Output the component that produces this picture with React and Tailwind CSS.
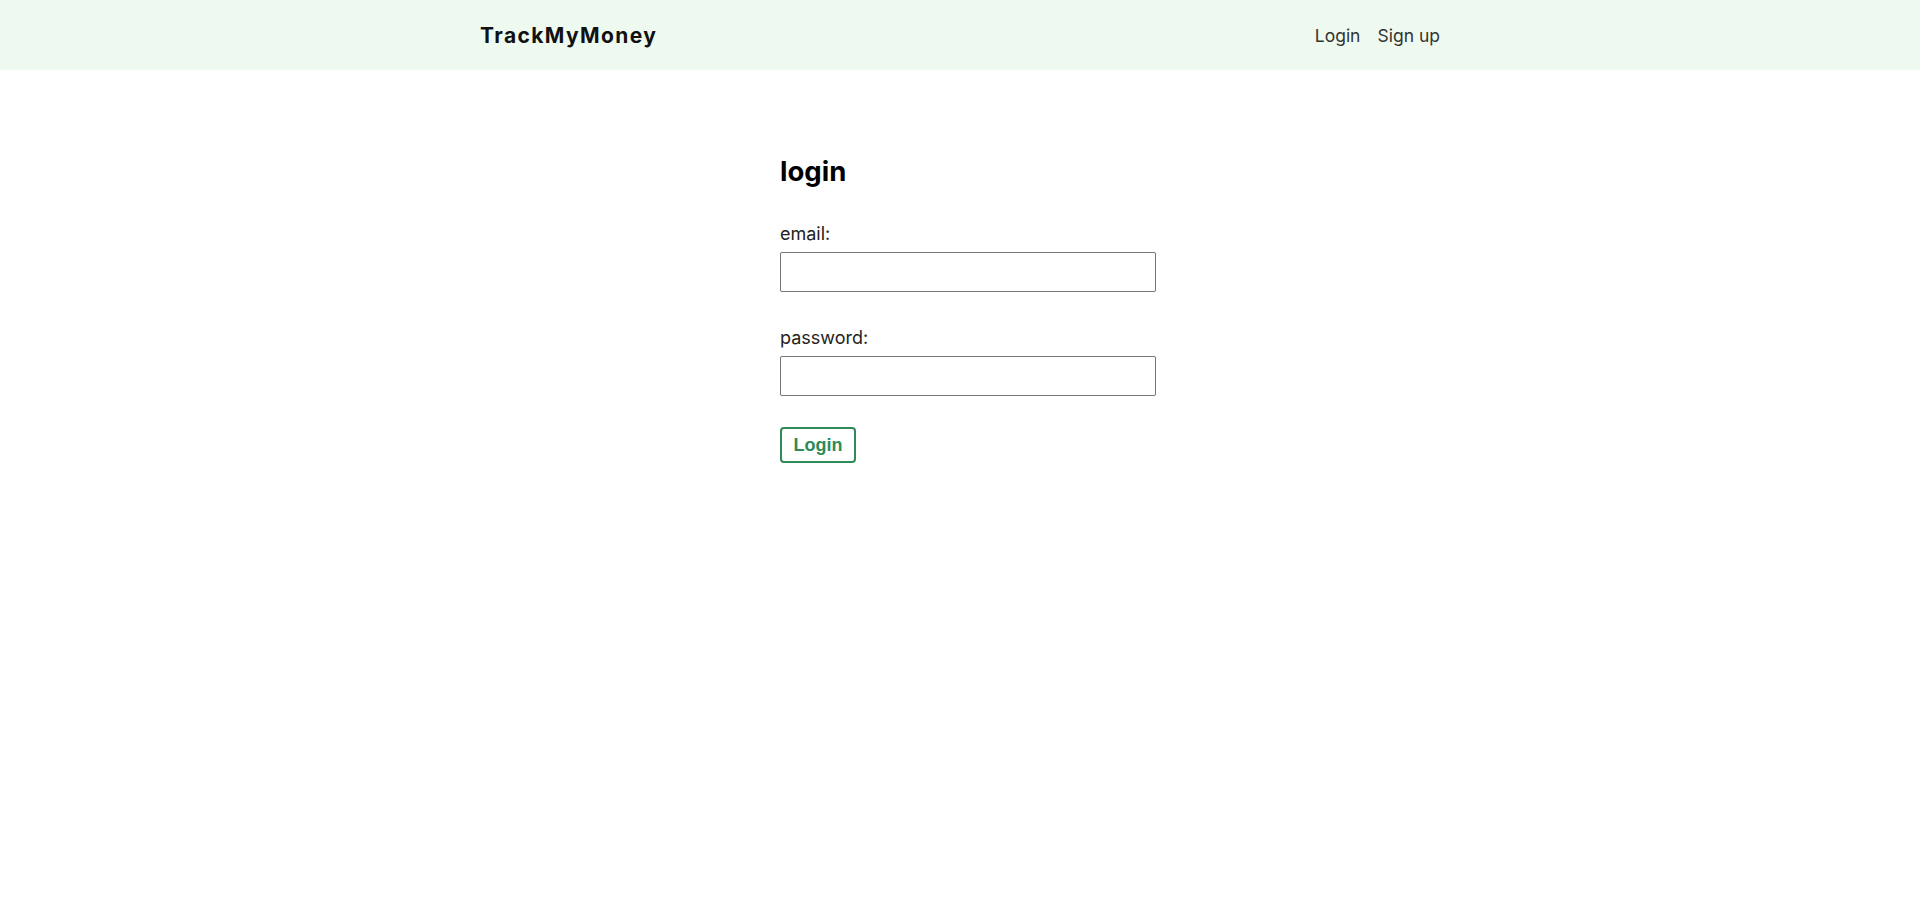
export default function App() {
  return (
    <div className="min-h-screen bg-white" style={{ fontFamily: 'Inter, "Noto Sans", sans-serif' }}>
      <header className="h-[70px] bg-[#eefaf0]">
        <div className="max-w-[960px] h-full mx-auto pt-[2px] flex items-center justify-between">
          <span className="text-[21px] font-bold tracking-[1.4px] text-[#111]">TrackMyMoney</span>
          <nav className="flex items-center gap-[17px] text-[17.5px] text-[#333]">
            <a href="#">Login</a>
            <a href="#">Sign up</a>
          </nav>
        </div>
      </header>

      <form className="w-[360px] mx-auto pt-[85px]" onSubmit={(e) => e.preventDefault()}>
        <h3 className="text-[27.5px] font-bold leading-[32px] text-black">login</h3>

        <label className="block mt-[35px] text-[18px] leading-[24px] text-[#222]">email:</label>
        <input
          type="email"
          className="block mt-[6px] w-[376px] h-[40px] px-[7px] border border-[#767676] rounded-[2px] bg-white"
        />

        <label className="block mt-[34px] text-[18px] leading-[24px] text-[#222]">password:</label>
        <input
          type="password"
          className="block mt-[6px] w-[376px] h-[40px] px-[7px] border border-[#767676] rounded-[2px] bg-white"
        />

        <button
          type="submit"
          className="mt-[31px] w-[76px] h-[36px] border-2 border-[#2e8b57] rounded-[4px] bg-white text-[#2e8b57] text-[18px] font-bold"
          style={{ fontFamily: '"Liberation Sans", Arial, sans-serif' }}
        >
          Login
        </button>
      </form>
    </div>
  );
}
